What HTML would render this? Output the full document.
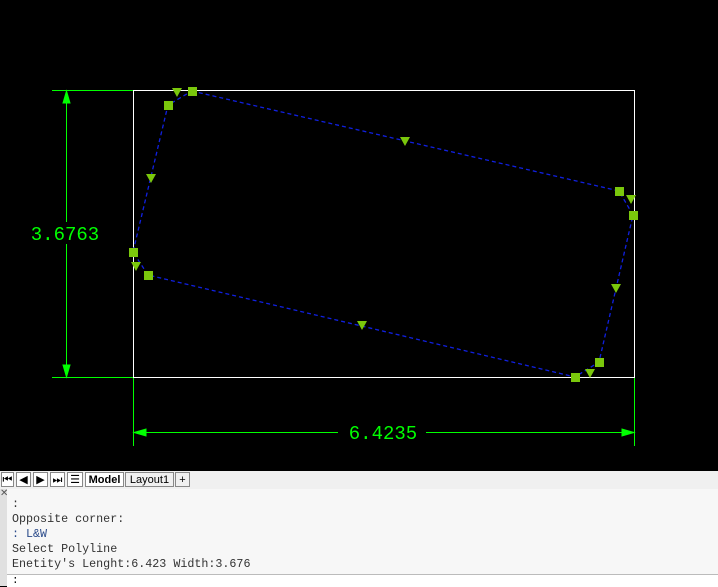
<!DOCTYPE html><html><head><style>
body{margin:0;width:718px;height:586px;background:#000;position:relative;overflow:hidden;font-family:"Liberation Sans",sans-serif}
#tabs{position:absolute;left:0;top:471px;width:718px;height:18px;background:#f0f0f0;border-bottom:1px solid #ccc}
.b{position:absolute;top:1px;height:15px;border:1px solid #888;background:#fff;font-size:11px;line-height:15px;text-align:center;box-sizing:border-box}
#cmd{position:absolute;left:0;top:489px;width:718px;height:97px;background:#f7f7f7}
#cmd pre{margin:0;position:absolute;left:12px;top:8px;font-family:"Liberation Mono",monospace;font-size:11.7px;line-height:15px;color:#333}
</style></head><body>
<svg width="718" height="471" style="position:absolute;left:0;top:0">
<rect x="133.5" y="90.5" width="501" height="287" fill="none" stroke="#fff" stroke-width="1"/>
<g stroke="#0f0" stroke-width="1" fill="#0f0">
<line x1="52" y1="90.5" x2="133" y2="90.5"/><line x1="52" y1="377.5" x2="133" y2="377.5"/>
<line x1="66.5" y1="91" x2="66.5" y2="377"/>
<polygon points="66.5,91 63,103 70,103"/><polygon points="66.5,377 63,365 70,365"/>
<line x1="133.5" y1="378" x2="133.5" y2="446"/><line x1="634.5" y1="378" x2="634.5" y2="446"/>
<line x1="134" y1="432.5" x2="338" y2="432.5"/><line x1="426" y1="432.5" x2="634" y2="432.5"/>
<polygon points="134,432.5 146,429 146,436"/><polygon points="634,432.5 622,429 622,436"/>
</g>
<rect x="24" y="222" width="82" height="22" fill="#000"/>
<text x="65" y="240" fill="#0f0" font-family="Liberation Mono,monospace" font-size="19" text-anchor="middle">3.6763</text>
<text x="383" y="439" fill="#0f0" font-family="Liberation Mono,monospace" font-size="19" text-anchor="middle">6.4235</text>
<polyline points="192,91 619,191 633,215 599,362 575,377 148,275 133,252 168,105 192,91" fill="none" stroke="#1020e0" stroke-width="1.3" stroke-dasharray="4,3"/>
<g fill="#7ac70c">
<rect x="188" y="87" width="9" height="9"/><rect x="615" y="187" width="9" height="9"/><rect x="629" y="211" width="9" height="9"/>
<rect x="595" y="358" width="9" height="9"/><rect x="571" y="373" width="9" height="9"/><rect x="144" y="271" width="9" height="9"/>
<rect x="129" y="248" width="9" height="9"/><rect x="164" y="101" width="9" height="9"/>
<polygon points="172,88 182,88 177,97"/><polygon points="400,137 410,137 405,146"/><polygon points="626,195 636,195 631,204"/>
<polygon points="611,284 621,284 616,293"/><polygon points="585,369 595,369 590,378"/><polygon points="357,321 367,321 362,330"/>
<polygon points="131,262 141,262 136,271"/><polygon points="146,174 156,174 151,183"/>
</g>
</svg>
<div id="tabs">
<div class="b" style="left:1px;width:13px">⏮</div>
<div class="b" style="left:16px;width:15px">◀</div>
<div class="b" style="left:33px;width:15px">▶</div>
<div class="b" style="left:50px;width:15px">⏭</div>
<div class="b" style="left:67px;width:16px">☰</div>
<div class="b" style="left:85px;width:39px;font-weight:bold;background:#fff">Model</div>
<div class="b" style="left:125px;width:49px;background:#f0f0f0">Layout1</div>
<div class="b" style="left:175px;width:15px;background:#f0f0f0">+</div>
</div>
<div id="cmd">
<div style="position:absolute;left:0;top:0;width:7px;height:97px;background:#e0e0e0;font-size:10px;color:#555;line-height:10px">✕</div>
<pre>:
Opposite corner:
<span style="color:#2a4a8a">: L&amp;W</span>
Select Polyline
Enetity's Lenght:6.423 Width:3.676</pre>
<div style="position:absolute;left:7px;top:85px;width:711px;height:12px;background:#fff;border-top:1px solid #bbb;font-family:'Liberation Mono',monospace;font-size:11px;padding-left:5px">:</div>
</div>
</body></html>
